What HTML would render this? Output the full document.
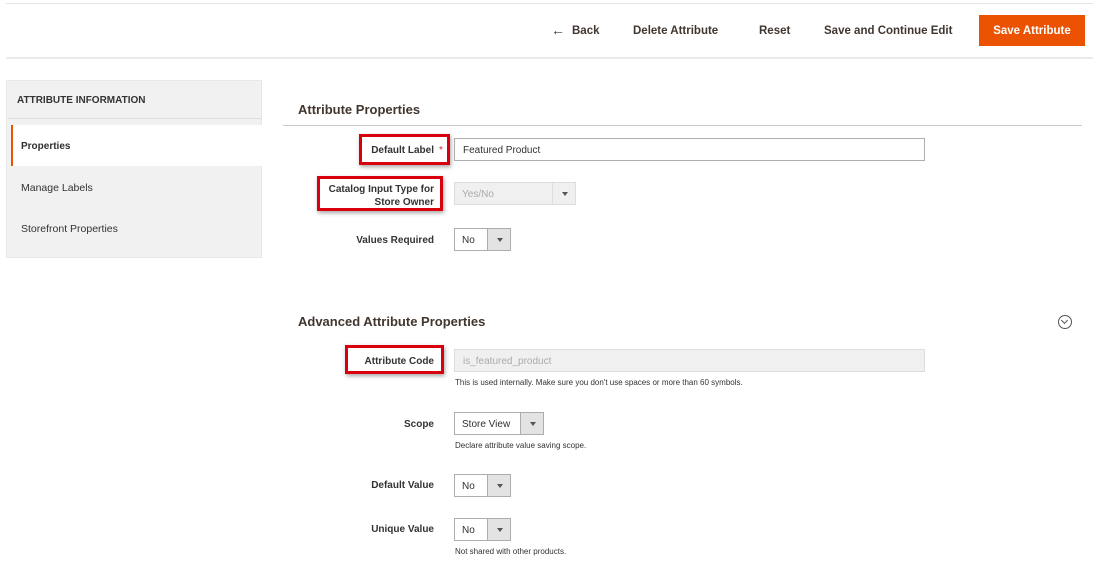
<!DOCTYPE html>
<html><head><meta charset="utf-8"><style>
*{margin:0;padding:0;box-sizing:border-box}
body{width:1099px;height:566px;background:#fff;font-family:"Liberation Sans",sans-serif;color:#303030;position:relative;overflow:hidden}
.a{position:absolute}
.t{font-size:11px;color:#333}
.lbl{font-size:10px;font-weight:bold;color:#333;text-align:right}
.red{position:absolute;border:3px solid #d9000d;box-shadow:1px 2px 4px rgba(0,0,0,.35)}
.inp{position:absolute;border:1px solid #adadad;background:#fff;font-size:10px;padding-left:8px;padding-top:1px;display:flex;align-items:center}
.sel{position:absolute;border:1px solid #adadad;background:#fff;font-size:10px;display:flex;align-items:center}
.sel span{flex:1;padding-left:7px;padding-top:1px}
.sel b{width:23px;height:100%;background:#e3e3e3;border-left:1px solid #adadad;position:relative}
.sel b:after{content:"";position:absolute;left:9px;top:9px;border:3px solid transparent;border-top:4px solid #555;border-bottom:0}
.inp.dis,.sel.dis{background:#f0f0f0;border-color:#ddd;color:#aaa}
.note{font-size:8px;color:#333}
.btn{font-size:11.5px;font-weight:bold;color:#41362f;top:25px}
</style></head><body>
<div class="a" style="left:6px;right:6px;top:3px;height:1px;background:#e6e6e6"></div>
<div class="a" style="left:6px;right:6px;top:57px;height:2px;background:#eaeaea"></div>
<div class="a btn" style="left:551px;top:22px;font-size:14px">&#8592;</div>
<div class="a btn" style="left:572px">Back</div>
<div class="a btn" style="left:633px">Delete Attribute</div>
<div class="a btn" style="left:759px">Reset</div>
<div class="a btn" style="left:824px">Save and Continue Edit</div>
<div class="a" style="left:979px;top:15px;width:106px;height:31px;background:#eb5202;color:#fff;font-size:11.5px;font-weight:bold;display:flex;align-items:center;justify-content:center;padding-top:1px">Save Attribute</div>

<div class="a" style="left:6px;top:80px;width:256px;height:178px;background:#f1f1f1;border:1px solid #e8e8e8"></div>
<div class="a" style="left:17px;top:95px;font-size:10px;font-weight:bold;color:#333">ATTRIBUTE INFORMATION</div>
<div class="a" style="left:8px;top:118px;width:254px;height:1px;background:#ddd"></div>
<div class="a" style="left:11px;top:125px;width:251px;height:41px;background:#fff;border-left:2px solid #eb5202"></div>
<div class="a" style="left:21px;top:141px;font-size:10px;font-weight:bold">Properties</div>
<div class="a t" style="left:21px;top:182px;font-size:10.5px">Manage Labels</div>
<div class="a t" style="left:21px;top:223px;font-size:10.5px">Storefront Properties</div>

<div class="a" style="left:298px;top:102px;font-size:13px;font-weight:bold;color:#41362f">Attribute Properties</div>
<div class="a" style="left:283px;top:125px;width:799px;height:1px;background:#ccc"></div>

<div class="red" style="left:359px;top:134px;width:91px;height:31px"></div>
<div class="a lbl" style="left:360px;top:145px;width:74px">Default Label</div>
<div class="a" style="left:439px;top:145px;color:#e22626;font-size:10px">*</div>
<div class="inp" style="left:454px;top:138px;width:471px;height:23px">Featured Product</div>

<div class="red" style="left:317px;top:176px;width:126px;height:35px"></div>
<div class="a lbl" style="left:320px;top:183px;width:114px;line-height:13px">Catalog Input Type for Store Owner</div>
<div class="sel dis" style="left:454px;top:182px;width:122px;height:23px"><span>Yes/No</span><b style="background:#f0f0f0;border-left-color:#ddd"></b></div>

<div class="a lbl" style="left:320px;top:235px;width:114px">Values Required</div>
<div class="sel" style="left:454px;top:228px;width:57px;height:23px"><span>No</span><b></b></div>

<div class="a" style="left:298px;top:314px;font-size:13px;font-weight:bold;color:#41362f">Advanced Attribute Properties</div>
<div class="a" style="left:1058px;top:315px;width:14px;height:14px;border:1px solid #555;border-radius:50%"></div>
<div class="a" style="left:1062px;top:318px;width:5px;height:5px;border-right:1px solid #555;border-bottom:1px solid #555;transform:rotate(45deg)"></div>

<div class="red" style="left:345px;top:345px;width:99px;height:29px"></div>
<div class="a lbl" style="left:350px;top:356px;width:84px">Attribute Code</div>
<div class="inp dis" style="left:454px;top:349px;width:471px;height:23px">is_featured_product</div>
<div class="a note" style="left:455px;top:378px">This is used internally. Make sure you don't use spaces or more than 60 symbols.</div>

<div class="a lbl" style="left:340px;top:419px;width:94px">Scope</div>
<div class="sel" style="left:454px;top:412px;width:90px;height:23px"><span>Store View</span><b></b></div>
<div class="a note" style="left:455px;top:441px">Declare attribute value saving scope.</div>

<div class="a lbl" style="left:340px;top:480px;width:94px">Default Value</div>
<div class="sel" style="left:454px;top:474px;width:57px;height:23px"><span>No</span><b></b></div>

<div class="a lbl" style="left:340px;top:524px;width:94px">Unique Value</div>
<div class="sel" style="left:454px;top:518px;width:57px;height:23px"><span>No</span><b></b></div>
<div class="a note" style="left:455px;top:547px">Not shared with other products.</div>
</body></html>
